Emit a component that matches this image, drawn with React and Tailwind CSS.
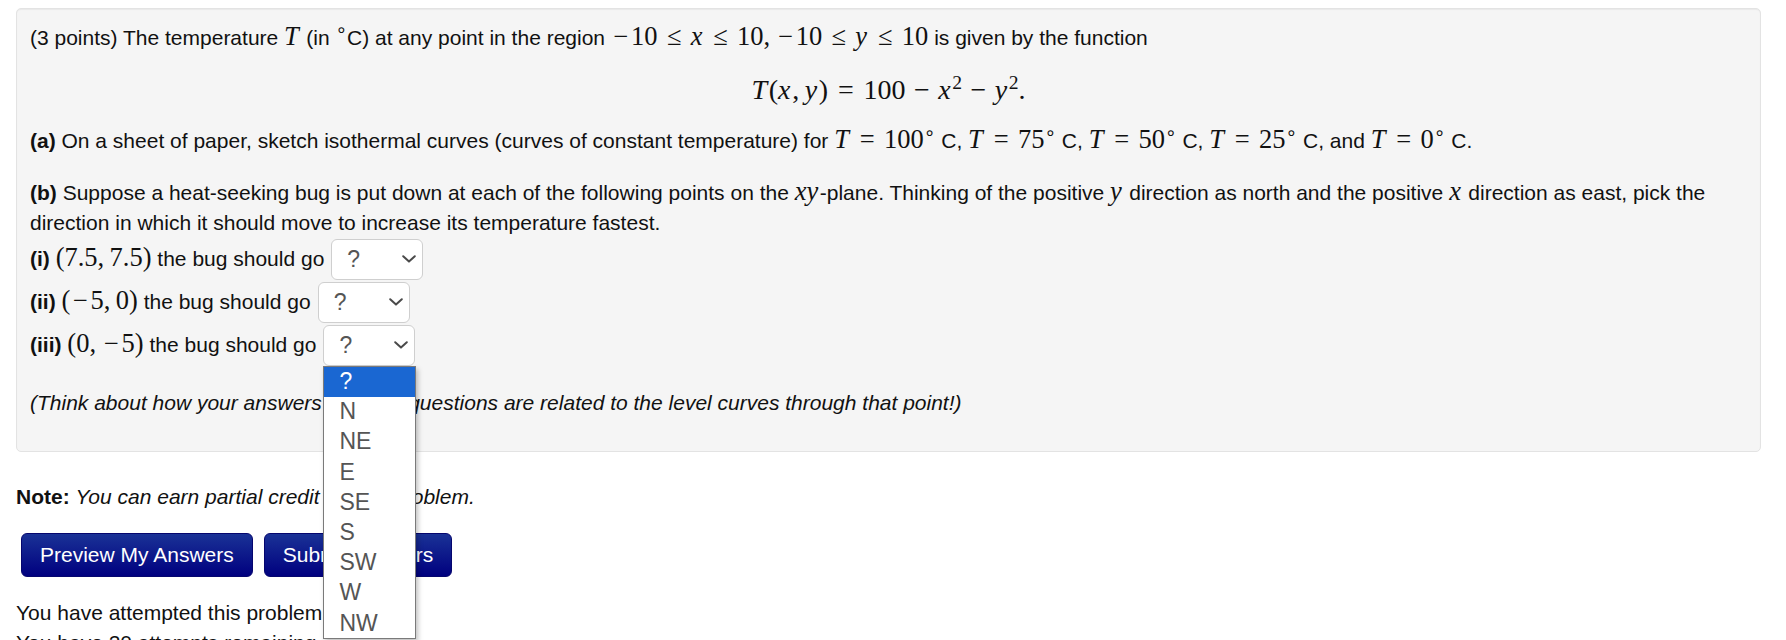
import React from "react";

const M = ({ children, size = "text-[26.5px]" }) => (
  <span className={`font-['Liberation_Serif','Times_New_Roman',serif] ${size} leading-none`}>{children}</span>
);
const V = ({ children }) => <i className="italic pr-[0.06em]">{children}</i>;
const R = ({ children }) => <span className="mx-[0.35em]">{children}</span>;
const B = ({ children }) => <span className="mx-[0.3em]">{children}</span>;
const Neg = () => <span className="px-[0.1em]">−</span>;
const Deg = () => <sup className="text-[0.7em] font-['DejaVu_Sans',sans-serif]">∘</sup>;
const Sq = () => <sup className="text-[0.7em]">2</sup>;

const Chevron = () => (
  <svg className="absolute right-[6px] top-1/2 -translate-y-1/2" width="14" height="8" viewBox="0 0 14 8" fill="none">
    <path d="M1.2 1.2 L7 6.6 L12.8 1.2" stroke="#4a4a4a" strokeWidth="2" strokeLinecap="round" strokeLinejoin="round" />
  </svg>
);

const options = ["?", "N", "NE", "E", "SE", "S", "SW", "W", "NW"];

const Select = ({ open }) => (
  <span className="relative ml-[7px] inline-flex h-[41px] w-[92px] shrink-0 items-center rounded-[6px] border border-[#cfcfcf] bg-white pl-[15px] font-['Liberation_Sans',Arial,sans-serif] text-[23px] text-[#555555]">
    ?
    <Chevron />
    {open && (
      <div className="absolute left-[-1px] top-[calc(100%+1px)] z-10 w-[93px] border border-[#7a7a7a] bg-white shadow-[2px_3px_5px_rgba(0,0,0,0.25)]">
        {options.map((o, i) => (
          <div
            key={o}
            className={
              i === 0
                ? "flex h-[30.2px] items-center bg-[#1a67d2] pl-[15px] text-[23px] leading-none text-white"
                : "flex h-[30.2px] items-center pl-[15px] text-[23px] leading-none text-[#555555]"
            }
          >
            {o}
          </div>
        ))}
      </div>
    )}
  </span>
);

export default function App() {
  return (
    <div className="min-h-[640px] bg-white pt-[8px] font-['Liberation_Sans',Arial,sans-serif] text-[21px] leading-[30px] text-[#111111]">
      <div className="ml-[16px] mr-[25px] rounded-[5px] border border-[#e3e3e3] bg-[#f5f5f5] pb-[33px] pl-[13px] pr-[13px] pt-[14px] shadow-[inset_0_1px_1px_rgba(0,0,0,0.05)]">
        <div>
          (3 points) The temperature <M><V>T</V></M> (in <M><Deg /></M>C) at any point in the region{" "}
          <M>
            <Neg />10<R>≤</R><V>x</V><R>≤</R>10,{"\u2009"}<Neg />10<R>≤</R><V>y</V><R>≤</R>10
          </M>{" "}
          is given by the function
        </div>
        <div className="flex h-[73px] items-center justify-center">
          <M size="text-[28px]">
            <V>T</V>(<V>x</V>,{"\u2009"}<V>y</V>)<R>=</R>100<B>−</B><V>x</V><Sq /><B>−</B><V>y</V><Sq />.
          </M>
        </div>
        <div>
          <b>(a)</b> On a sheet of paper, sketch isothermal curves (curves of constant temperature) for{" "}
          <M><V>T</V><R>=</R>100<Deg /></M> C, <M><V>T</V><R>=</R>75<Deg /></M> C, <M><V>T</V><R>=</R>50<Deg /></M> C,{" "}
          <M><V>T</V><R>=</R>25<Deg /></M> C, and <M><V>T</V><R>=</R>0<Deg /></M> C.
        </div>
        <div className="mt-[21.5px]">
          <b>(b)</b> Suppose a heat-seeking bug is put down at each of the following points on the <M><V>xy</V></M>-plane. Thinking of the positive <M><V>y</V></M> direction as north and the positive <M><V>x</V></M> direction as east, pick the
          <br />
          direction in which it should move to increase its temperature fastest.
        </div>
        <div className="flex h-[43px] items-center">
          <span>
            <b>(i)</b> <M>(7.5,{"\u2009"}7.5)</M> the bug should go
          </span>
          <Select />
        </div>
        <div className="flex h-[43px] items-center">
          <span>
            <b>(ii)</b> <M>(<Neg />5,{"\u2009"}0)</M> the bug should go
          </span>
          <Select />
        </div>
        <div className="flex h-[43px] items-center">
          <span>
            <b>(iii)</b> <M>(0,{"\u2009"}<Neg />5)</M> the bug should go
          </span>
          <Select open />
        </div>
        <div className="mt-[21.5px] italic">
          (Think about how your answers to these questions are related to the level curves through that point!)
        </div>
      </div>

      <div className="ml-[16px] mt-[30px]">
        <b>Note:</b> <i>You can earn partial credit on this problem.</i>
      </div>

      <div className="ml-[21px] mt-[21px] flex gap-[11px]">
        <button className="h-[44px] rounded-[6px] border border-[#06066e] bg-[linear-gradient(to_bottom,#1a3296,#00007f)] px-[18px] text-[21px] text-white">
          Preview My Answers
        </button>
        <button className="h-[44px] rounded-[6px] border border-[#06066e] bg-[linear-gradient(to_bottom,#1a3296,#00007f)] px-[18px] text-[21px] text-white">
          Submit Answers
        </button>
      </div>

      <div className="ml-[16px] mt-[21px]">You have attempted this problem 0 times.</div>
      <div className="ml-[16px]">You have 20 attempts remaining.</div>
    </div>
  );
}
